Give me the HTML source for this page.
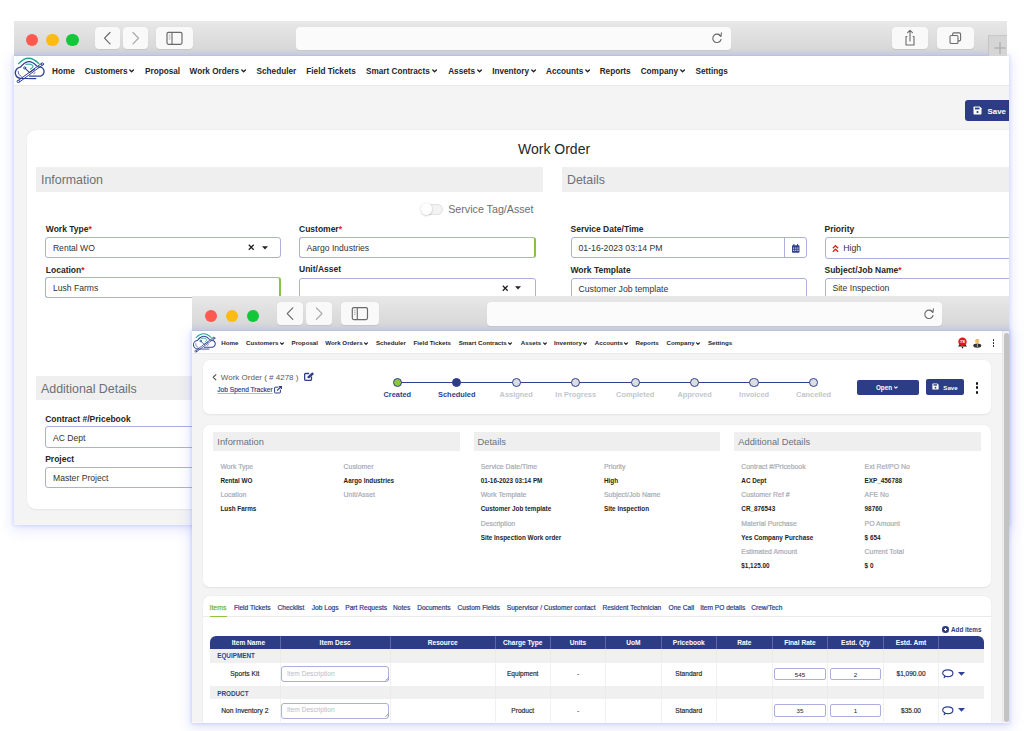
<!DOCTYPE html><html><head><meta charset="utf-8"><style>
html,body{margin:0;padding:0;}
body{width:1024px;height:731px;position:relative;overflow:hidden;background:#fff;font-family:"Liberation Sans",sans-serif;}
.r{position:absolute;box-sizing:border-box;}
.t{position:absolute;white-space:nowrap;line-height:normal;}
svg.r{overflow:visible}
</style></head><body>
<div class="r" style="left:14.00px;top:56.00px;width:995.00px;height:469.00px;box-shadow:0 0 3px 1px rgba(120,130,255,0.22),0 3px 12px 2px rgba(120,130,255,0.20)"></div>
<div style="position:absolute;left:0;top:0;width:1024px;height:731px;clip-path:inset(21px 15px 206px 13.6px)">
<div class="r" style="left:13.60px;top:21.00px;width:993.90px;height:35.00px;background:linear-gradient(#e8e8e8,#d8d8d8 80%,#c3c7e0);"></div>
<div class="r" style="left:13.60px;top:55.00px;width:993.90px;height:1.20px;background:#bcc1df"></div>
<div class="r" style="left:26.00px;top:34.00px;width:12.40px;height:12.40px;border-radius:50%;background:#fd5a4f"></div>
<div class="r" style="left:46.20px;top:34.00px;width:12.40px;height:12.40px;border-radius:50%;background:#fdbb13"></div>
<div class="r" style="left:66.40px;top:34.00px;width:12.40px;height:12.40px;border-radius:50%;background:#12c73a"></div>
<div class="r" style="left:95.00px;top:27.00px;width:25.30px;height:22.40px;background:#f9f9f9;border-radius:4px;box-shadow:0 0.5px 1px rgba(0,0,0,0.08)"></div>
<div class="r" style="left:123.00px;top:27.00px;width:25.00px;height:22.40px;background:#f9f9f9;border-radius:4px;box-shadow:0 0.5px 1px rgba(0,0,0,0.08)"></div>
<div class="r" style="left:156.30px;top:27.00px;width:37.00px;height:22.40px;background:#f9f9f9;border-radius:4px;box-shadow:0 0.5px 1px rgba(0,0,0,0.08)"></div>
<svg class="r" style="left:95px;top:27px" width="25.3" height="22.4" viewBox="0 0 25.3 22.4"><path d="M15 5.5 L9.5 11.2 L15 16.9" fill="none" stroke="#6a6a6a" stroke-width="1.2" stroke-linecap="round" stroke-linejoin="round"/></svg>
<svg class="r" style="left:123px;top:27px" width="25" height="22.4" viewBox="0 0 25 22.4"><path d="M10 5.5 L15.5 11.2 L10 16.9" fill="none" stroke="#a5a5a5" stroke-width="1.2" stroke-linecap="round" stroke-linejoin="round"/></svg>
<svg class="r" style="left:156.3px;top:27px" width="37" height="22.4" viewBox="0 0 37 22.4"><rect x="11" y="5.3" width="15" height="12" rx="1.5" fill="none" stroke="#6a6a6a" stroke-width="1.2"/><line x1="16" y1="5.3" x2="16" y2="17.3" stroke="#6a6a6a" stroke-width="1.1"/><line x1="12.8" y1="8" x2="14.4" y2="8" stroke="#8a8a8a" stroke-width="0.7"/><line x1="12.8" y1="10" x2="14.4" y2="10" stroke="#8a8a8a" stroke-width="0.7"/><line x1="12.8" y1="12" x2="14.4" y2="12" stroke="#8a8a8a" stroke-width="0.7"/></svg>
<div class="r" style="left:295.50px;top:27.40px;width:435.50px;height:22.50px;background:#fbfbfb;border-radius:4px;box-shadow:0 0.5px 1px rgba(0,0,0,0.06)"></div>
<svg class="r" style="left:710px;top:31px" width="14" height="14" viewBox="0 0 14 14"><path d="M10.6 5.2 A4.2 4.2 0 1 0 11 8.5" fill="none" stroke="#6a6a6a" stroke-width="1.1" stroke-linecap="round"/><path d="M8.2 3.2 L11 5.2 L11.4 1.9" fill="none" stroke="#6a6a6a" stroke-width="1.1" stroke-linecap="round" stroke-linejoin="round"/></svg>
<div class="r" style="left:891.80px;top:27.00px;width:36.20px;height:22.40px;background:#f9f9f9;border-radius:4px;box-shadow:0 0.5px 1px rgba(0,0,0,0.08)"></div>
<div class="r" style="left:937.00px;top:27.00px;width:37.00px;height:22.40px;background:#f9f9f9;border-radius:4px;box-shadow:0 0.5px 1px rgba(0,0,0,0.08)"></div>
<svg class="r" style="left:891.8px;top:27px" width="36" height="22.4" viewBox="0 0 36 22.4"><path d="M15.3 9.5 H14 V18 H22 V9.5 H20.7" fill="none" stroke="#6a6a6a" stroke-width="1.1" stroke-linejoin="round"/><path d="M18 14 V3.5 M15.6 5.7 L18 3.3 L20.4 5.7" fill="none" stroke="#6a6a6a" stroke-width="1.1" stroke-linecap="round" stroke-linejoin="round"/></svg>
<svg class="r" style="left:937px;top:27px" width="37" height="22.4" viewBox="0 0 37 22.4"><rect x="13" y="8.5" width="8" height="8" rx="1.3" fill="none" stroke="#6a6a6a" stroke-width="1.1"/><path d="M15.6 8.5 V7.2 Q15.6 5.9 16.9 5.9 H22.3 Q23.6 5.9 23.6 7.2 V12.6 Q23.6 13.9 22.3 13.9 H21" fill="none" stroke="#6a6a6a" stroke-width="1.1"/></svg>
<div class="r" style="left:987.80px;top:35.20px;width:19.70px;height:20.80px;background:#d5d5d5;border-left:1px solid #c4c4c4;border-top:1px solid #c8c8c8"></div>
<svg class="r" style="left:990px;top:38px" width="20" height="18" viewBox="0 0 20 18"><path d="M10 4 V16 M4 10 H16" stroke="#a8a8a8" stroke-width="1.1"/></svg>
<div class="r" style="left:14.00px;top:56.00px;width:995.00px;height:30.00px;background:#fff;border-bottom:1px solid #e8e8e8"></div>
<svg class="r" style="left:12.00px;top:56.00px" width="40.00" height="30.00" viewBox="0 0 40 30">
<g fill="none" stroke-linecap="round" stroke-linejoin="round">
<path d="M6.6 7.6 Q16.4 -3.1 26.8 7.6" stroke="#21a593" stroke-width="1.35"/>
<path d="M14 8.4 C19.5 7.6 24 9.6 18.5 13.1" stroke="#3cb2a0" stroke-width="1.15"/>
<path d="M9.4 22.4 A5.6 5.6 0 0 1 8.4 11.2 Q16.4 0.6 24.6 9.9" stroke="#2f4190" stroke-width="1.35"/>
<path d="M26.2 11 A4.7 4.7 0 1 1 28.6 20.1 L17.6 20.1" stroke="#2f4190" stroke-width="1.35"/>
<path d="M9.4 22.5 L23.8 22.6" stroke="#2f4190" stroke-width="1.2"/>
<path d="M6.1 15.4 Q5.2 18.6 9.3 20.5" stroke="#2f4190" stroke-width="0.8"/>
<path d="M6.7 24.2 L29.2 7.6 M7.6 25.9 L30.4 9.1" stroke="#2f4190" stroke-width="1.0"/>
<path d="M13.4 12.6 L17.6 16.6 L22.6 13" stroke="#2f4190" stroke-width="1.1"/>
<path d="M21.7 17.7 L23 16.8" stroke="#2f4190" stroke-width="0.8"/>
<circle cx="12.7" cy="11.9" r="1.05" stroke="#2f4190" stroke-width="1"/>
<circle cx="30.3" cy="8.1" r="1.25" stroke="#2f4190" stroke-width="1"/>
<circle cx="6.3" cy="25.4" r="1.25" stroke="#2f4190" stroke-width="1"/>
</g></svg>
<div class="t" style="left:52.00px;top:66.98px;font-size:8.2px;font-weight:700;color:#262626;">Home</div>
<div class="t" style="left:84.80px;top:66.98px;font-size:8.2px;font-weight:700;color:#262626;">Customers</div>
<svg class="r" style="left:129.43px;top:68.70px" width="5.2" height="4.12" viewBox="0 0 10 7"><path d="M1.5 1.5 L5 5 L8.5 1.5" fill="none" stroke="#262626" stroke-width="2.69" stroke-linecap="round" stroke-linejoin="round"/></svg>
<div class="t" style="left:145.00px;top:66.98px;font-size:8.2px;font-weight:700;color:#262626;">Proposal</div>
<div class="t" style="left:189.60px;top:66.98px;font-size:8.2px;font-weight:700;color:#262626;">Work Orders</div>
<svg class="r" style="left:240.92px;top:68.70px" width="5.2" height="4.12" viewBox="0 0 10 7"><path d="M1.5 1.5 L5 5 L8.5 1.5" fill="none" stroke="#262626" stroke-width="2.69" stroke-linecap="round" stroke-linejoin="round"/></svg>
<div class="t" style="left:256.60px;top:66.98px;font-size:8.2px;font-weight:700;color:#262626;">Scheduler</div>
<div class="t" style="left:306.30px;top:66.98px;font-size:8.2px;font-weight:700;color:#262626;">Field Tickets</div>
<div class="t" style="left:366.00px;top:66.98px;font-size:8.2px;font-weight:700;color:#262626;">Smart Contracts</div>
<svg class="r" style="left:431.59px;top:68.70px" width="5.2" height="4.12" viewBox="0 0 10 7"><path d="M1.5 1.5 L5 5 L8.5 1.5" fill="none" stroke="#262626" stroke-width="2.69" stroke-linecap="round" stroke-linejoin="round"/></svg>
<div class="t" style="left:448.20px;top:66.98px;font-size:8.2px;font-weight:700;color:#262626;">Assets</div>
<svg class="r" style="left:476.89px;top:68.70px" width="5.2" height="4.12" viewBox="0 0 10 7"><path d="M1.5 1.5 L5 5 L8.5 1.5" fill="none" stroke="#262626" stroke-width="2.69" stroke-linecap="round" stroke-linejoin="round"/></svg>
<div class="t" style="left:492.20px;top:66.98px;font-size:8.2px;font-weight:700;color:#262626;">Inventory</div>
<svg class="r" style="left:530.91px;top:68.70px" width="5.2" height="4.12" viewBox="0 0 10 7"><path d="M1.5 1.5 L5 5 L8.5 1.5" fill="none" stroke="#262626" stroke-width="2.69" stroke-linecap="round" stroke-linejoin="round"/></svg>
<div class="t" style="left:546.00px;top:66.98px;font-size:8.2px;font-weight:700;color:#262626;">Accounts</div>
<svg class="r" style="left:585.16px;top:68.70px" width="5.2" height="4.12" viewBox="0 0 10 7"><path d="M1.5 1.5 L5 5 L8.5 1.5" fill="none" stroke="#262626" stroke-width="2.69" stroke-linecap="round" stroke-linejoin="round"/></svg>
<div class="t" style="left:599.70px;top:66.98px;font-size:8.2px;font-weight:700;color:#262626;">Reports</div>
<div class="t" style="left:640.70px;top:66.98px;font-size:8.2px;font-weight:700;color:#262626;">Company</div>
<svg class="r" style="left:679.86px;top:68.70px" width="5.2" height="4.12" viewBox="0 0 10 7"><path d="M1.5 1.5 L5 5 L8.5 1.5" fill="none" stroke="#262626" stroke-width="2.69" stroke-linecap="round" stroke-linejoin="round"/></svg>
<div class="t" style="left:695.50px;top:66.98px;font-size:8.2px;font-weight:700;color:#262626;">Settings</div>
<div class="r" style="left:14.00px;top:86.00px;width:995.00px;height:439.00px;background:#f4f4f4"></div>
<div class="r" style="left:965.00px;top:99.50px;width:47.00px;height:21.00px;background:#2c3d85;border-radius:3px"></div>
<svg class="r" style="left:973px;top:105.5px" width="9" height="9" viewBox="0 0 9 9"><path d="M0.5 1.2 Q0.5 0.5 1.2 0.5 H6.8 L8.5 2.2 V7.8 Q8.5 8.5 7.8 8.5 H1.2 Q0.5 8.5 0.5 7.8 Z" fill="#fff"/><rect x="2" y="1.6" width="4.5" height="1.8" fill="#2c3d85"/><circle cx="4.5" cy="6" r="1.1" fill="#2c3d85"/></svg>
<div class="t" style="left:987.50px;top:106.65px;font-size:7.9px;font-weight:700;color:#fff;">Save</div>
<div class="r" style="left:27.00px;top:130.00px;width:1033.00px;height:379.00px;background:#fff;border-radius:9px;box-shadow:0 0.5px 2px rgba(0,0,0,0.07)"></div>
<div class="t" style="left:518.00px;top:141.13px;font-size:14.0px;font-weight:400;color:#262626;">Work Order</div>
<div class="r" style="left:36.10px;top:167.00px;width:507.40px;height:25.00px;background:#efefef"></div>
<div class="t" style="left:41.00px;top:173.38px;font-size:12.4px;font-weight:400;color:#6c7079;">Information</div>
<div class="r" style="left:561.50px;top:167.00px;width:498.50px;height:25.00px;background:#efefef"></div>
<div class="t" style="left:567.00px;top:172.68px;font-size:12.4px;font-weight:400;color:#6c7079;">Details</div>
<div class="r" style="left:421.00px;top:203.60px;width:22.00px;height:11.20px;background:#f3f3f3;border:1px solid #e0e0e0;border-radius:6px"></div>
<div class="r" style="left:420.60px;top:203.00px;width:11.80px;height:11.80px;background:#fff;border-radius:50%;box-shadow:0 0.6px 2px rgba(0,0,0,0.28)"></div>
<div class="t" style="left:448.20px;top:203.22px;font-size:10.7px;font-weight:400;color:#6e6e6e;">Service Tag/Asset</div>
<div class="t" style="left:45.80px;top:223.81px;font-size:8.5px;font-weight:700;color:#262626;">Work Type<span style="color:#e02020">*</span></div>
<div class="r" style="left:45.20px;top:236.60px;width:235.70px;height:21.60px;background:#fff;border:1px solid #a9b0dc;border-radius:3px;"></div>
<div class="t" style="left:52.90px;top:243.02px;font-size:8.6px;font-weight:400;color:#333;">Rental WO</div>
<svg class="r" style="left:248.30px;top:244.40px" width="6.5" height="6.5" viewBox="0 0 6.5 6.5"><path d="M0.8 0.8 L5.7 5.7 M5.7 0.8 L0.8 5.7" stroke="#222" stroke-width="1.3"/></svg>
<svg class="r" style="left:261.50px;top:245.80px" width="6" height="4" viewBox="0 0 6 4"><path d="M0 0.3 H6 L3 3.5 Z" fill="#222"/></svg>
<div class="t" style="left:299.00px;top:224.01px;font-size:8.5px;font-weight:700;color:#262626;">Customer<span style="color:#e02020">*</span></div>
<div class="r" style="left:298.70px;top:236.70px;width:237.00px;height:21.30px;background:#fff;border:1px solid #a9b0dc;border-radius:3px;border-right:2px solid #86c440;"></div>
<div class="t" style="left:306.60px;top:242.82px;font-size:8.6px;font-weight:400;color:#333;">Aargo Industries</div>
<div class="t" style="left:570.50px;top:224.01px;font-size:8.5px;font-weight:700;color:#262626;">Service Date/Time</div>
<div class="r" style="left:570.50px;top:237.40px;width:236.00px;height:21.10px;background:#fff;border:1px solid #a9b0dc;border-radius:3px;"></div>
<div class="r" style="left:784.00px;top:237.40px;width:1.00px;height:21.10px;background:#a9b0dc"></div>
<svg class="r" style="left:792px;top:244px" width="7.5" height="8.7" viewBox="0 0 7.5 8.7"><rect x="0" y="1.3" width="7.5" height="7.4" rx="0.8" fill="#2f4190"/><rect x="1.4" y="0" width="1" height="2" fill="#2f4190"/><rect x="5.1" y="0" width="1" height="2" fill="#2f4190"/><g fill="#fff"><rect x="1" y="3.6" width="1.2" height="1"/><rect x="3.15" y="3.6" width="1.2" height="1"/><rect x="5.3" y="3.6" width="1.2" height="1"/><rect x="1" y="5.8" width="1.2" height="1"/><rect x="3.15" y="5.8" width="1.2" height="1"/><rect x="5.3" y="5.8" width="1.2" height="1"/></g></svg>
<div class="t" style="left:578.50px;top:243.43px;font-size:8.7px;font-weight:400;color:#333;">01-16-2023 03:14 PM</div>
<div class="t" style="left:824.50px;top:224.01px;font-size:8.5px;font-weight:700;color:#262626;">Priority</div>
<div class="r" style="left:824.50px;top:237.30px;width:235.50px;height:21.50px;background:#fff;border:1px solid #a9b0dc;border-radius:3px;"></div>
<svg class="r" style="left:831.7px;top:245px" width="7" height="7.5" viewBox="0 0 7 7.5"><path d="M0.8 3.3 L3.5 0.8 L6.2 3.3 M0.8 6.7 L3.5 4.2 L6.2 6.7" fill="none" stroke="#e8201a" stroke-width="1.4"/></svg>
<div class="t" style="left:843.30px;top:243.43px;font-size:8.7px;font-weight:400;color:#333;">High</div>
<div class="t" style="left:45.80px;top:264.51px;font-size:8.5px;font-weight:700;color:#262626;">Location<span style="color:#e02020">*</span></div>
<div class="r" style="left:45.20px;top:277.20px;width:235.70px;height:21.30px;background:#fff;border:1px solid #a9b0dc;border-radius:3px;border-right:2px solid #86c440;"></div>
<div class="t" style="left:52.90px;top:283.22px;font-size:8.6px;font-weight:400;color:#333;">Lush Farms</div>
<div class="t" style="left:299.00px;top:264.31px;font-size:8.5px;font-weight:700;color:#262626;">Unit/Asset</div>
<div class="r" style="left:298.70px;top:277.50px;width:237.00px;height:21.50px;background:#fff;border:1px solid #a9b0dc;border-radius:3px;"></div>
<svg class="r" style="left:502.10px;top:285.00px" width="6.5" height="6.5" viewBox="0 0 6.5 6.5"><path d="M0.8 0.8 L5.7 5.7 M5.7 0.8 L0.8 5.7" stroke="#222" stroke-width="1.3"/></svg>
<svg class="r" style="left:515.30px;top:286.40px" width="6" height="4" viewBox="0 0 6 4"><path d="M0 0.3 H6 L3 3.5 Z" fill="#222"/></svg>
<div class="t" style="left:570.50px;top:264.61px;font-size:8.5px;font-weight:700;color:#262626;">Work Template</div>
<div class="r" style="left:570.50px;top:277.50px;width:236.00px;height:21.50px;background:#fff;border:1px solid #a9b0dc;border-radius:3px;"></div>
<div class="t" style="left:578.50px;top:283.73px;font-size:8.7px;font-weight:400;color:#333;">Customer Job template</div>
<div class="t" style="left:824.50px;top:264.61px;font-size:8.5px;font-weight:700;color:#262626;">Subject/Job Name<span style="color:#e02020">*</span></div>
<div class="r" style="left:824.50px;top:277.50px;width:235.50px;height:21.50px;background:#fff;border:1px solid #a9b0dc;border-radius:3px;"></div>
<div class="t" style="left:832.40px;top:283.03px;font-size:8.7px;font-weight:400;color:#333;">Site Inspection</div>
<div class="r" style="left:35.90px;top:375.50px;width:507.60px;height:24.70px;background:#efefef"></div>
<div class="t" style="left:41.00px;top:381.58px;font-size:12.4px;font-weight:400;color:#6c7079;">Additional Details</div>
<div class="t" style="left:45.20px;top:414.01px;font-size:8.5px;font-weight:700;color:#262626;">Contract #/Pricebook</div>
<div class="r" style="left:45.20px;top:426.20px;width:235.70px;height:22.20px;background:#fff;border:1px solid #a9b0dc;border-radius:3px;"></div>
<div class="t" style="left:53.00px;top:432.82px;font-size:8.6px;font-weight:400;color:#333;">AC Dept</div>
<div class="t" style="left:45.20px;top:454.01px;font-size:8.5px;font-weight:700;color:#262626;">Project</div>
<div class="r" style="left:45.20px;top:467.30px;width:235.70px;height:21.10px;background:#fff;border:1px solid #a9b0dc;border-radius:3px;"></div>
<div class="t" style="left:53.00px;top:473.22px;font-size:8.6px;font-weight:400;color:#333;">Master Project</div>
</div>
<div class="r" style="left:192.00px;top:331.00px;width:817.00px;height:391.50px;box-shadow:0 0 3px 1px rgba(120,130,255,0.25),0 3px 12px 2px rgba(120,130,255,0.22)"></div>
<div style="position:absolute;left:0;top:0;width:1024px;height:731px;clip-path:inset(296px 15px 8.5px 192px)">
<div class="r" style="left:192.00px;top:296.00px;width:817.00px;height:35.00px;background:linear-gradient(#e8e8e8,#d8d8d8 80%,#c3c7e0);"></div>
<div class="r" style="left:192.00px;top:330.00px;width:817.00px;height:1.20px;background:#bcc1df"></div>
<div class="r" style="left:204.80px;top:309.50px;width:12.60px;height:12.60px;border-radius:50%;background:#fd5a4f"></div>
<div class="r" style="left:225.75px;top:309.50px;width:12.60px;height:12.60px;border-radius:50%;background:#fdbb13"></div>
<div class="r" style="left:246.70px;top:309.50px;width:12.60px;height:12.60px;border-radius:50%;background:#12c73a"></div>
<div class="r" style="left:276.70px;top:302.20px;width:26.20px;height:23.20px;background:#f9f9f9;border-radius:4px;box-shadow:0 0.5px 1px rgba(0,0,0,0.08)"></div>
<div class="r" style="left:305.70px;top:302.20px;width:26.20px;height:23.20px;background:#f9f9f9;border-radius:4px;box-shadow:0 0.5px 1px rgba(0,0,0,0.08)"></div>
<div class="r" style="left:341.00px;top:302.20px;width:37.70px;height:23.20px;background:#f9f9f9;border-radius:4px;box-shadow:0 0.5px 1px rgba(0,0,0,0.08)"></div>
<svg class="r" style="left:276.7px;top:302.2px" width="26.2" height="23.2" viewBox="0 0 26.2 23.2"><path d="M15.8 5.8 L10.2 11.6 L15.8 17.4" fill="none" stroke="#6a6a6a" stroke-width="1.2" stroke-linecap="round" stroke-linejoin="round"/></svg>
<svg class="r" style="left:305.7px;top:302.2px" width="26.2" height="23.2" viewBox="0 0 26.2 23.2"><path d="M10.4 5.8 L16 11.6 L10.4 17.4" fill="none" stroke="#a5a5a5" stroke-width="1.2" stroke-linecap="round" stroke-linejoin="round"/></svg>
<svg class="r" style="left:341px;top:302.2px" width="37.7" height="23.2" viewBox="0 0 37.7 23.2"><rect x="11.3" y="5.6" width="15.2" height="12" rx="1.5" fill="none" stroke="#6a6a6a" stroke-width="1.2"/><line x1="16.3" y1="5.6" x2="16.3" y2="17.6" stroke="#6a6a6a" stroke-width="1.1"/><line x1="13.1" y1="8.3" x2="14.6" y2="8.3" stroke="#8a8a8a" stroke-width="0.7"/><line x1="13.1" y1="10.3" x2="14.6" y2="10.3" stroke="#8a8a8a" stroke-width="0.7"/><line x1="13.1" y1="12.3" x2="14.6" y2="12.3" stroke="#8a8a8a" stroke-width="0.7"/></svg>
<div class="r" style="left:486.80px;top:302.10px;width:455.20px;height:23.50px;background:#fbfbfb;border-radius:4px;box-shadow:0 0.5px 1px rgba(0,0,0,0.06)"></div>
<svg class="r" style="left:922px;top:306.5px" width="14" height="14" viewBox="0 0 14 14"><path d="M10.6 5.2 A4.2 4.2 0 1 0 11 8.5" fill="none" stroke="#6a6a6a" stroke-width="1.1" stroke-linecap="round"/><path d="M8.2 3.2 L11 5.2 L11.4 1.9" fill="none" stroke="#6a6a6a" stroke-width="1.1" stroke-linecap="round" stroke-linejoin="round"/></svg>
<div class="r" style="left:192.00px;top:331.00px;width:810.00px;height:23.00px;background:#fff;border-bottom:1px solid #ebebeb"></div>
<svg class="r" style="left:191.20px;top:331.50px" width="30.25" height="22.69" viewBox="0 0 40 30">
<g fill="none" stroke-linecap="round" stroke-linejoin="round">
<path d="M6.6 7.6 Q16.4 -3.1 26.8 7.6" stroke="#21a593" stroke-width="1.35"/>
<path d="M14 8.4 C19.5 7.6 24 9.6 18.5 13.1" stroke="#3cb2a0" stroke-width="1.15"/>
<path d="M9.4 22.4 A5.6 5.6 0 0 1 8.4 11.2 Q16.4 0.6 24.6 9.9" stroke="#2f4190" stroke-width="1.35"/>
<path d="M26.2 11 A4.7 4.7 0 1 1 28.6 20.1 L17.6 20.1" stroke="#2f4190" stroke-width="1.35"/>
<path d="M9.4 22.5 L23.8 22.6" stroke="#2f4190" stroke-width="1.2"/>
<path d="M6.1 15.4 Q5.2 18.6 9.3 20.5" stroke="#2f4190" stroke-width="0.8"/>
<path d="M6.7 24.2 L29.2 7.6 M7.6 25.9 L30.4 9.1" stroke="#2f4190" stroke-width="1.0"/>
<path d="M13.4 12.6 L17.6 16.6 L22.6 13" stroke="#2f4190" stroke-width="1.1"/>
<path d="M21.7 17.7 L23 16.8" stroke="#2f4190" stroke-width="0.8"/>
<circle cx="12.7" cy="11.9" r="1.05" stroke="#2f4190" stroke-width="1"/>
<circle cx="30.3" cy="8.1" r="1.25" stroke="#2f4190" stroke-width="1"/>
<circle cx="6.3" cy="25.4" r="1.25" stroke="#2f4190" stroke-width="1"/>
</g></svg>
<div class="t" style="left:221.20px;top:339.39px;font-size:6.2px;font-weight:700;color:#262626;">Home</div>
<div class="t" style="left:246.01px;top:339.39px;font-size:6.2px;font-weight:700;color:#262626;">Customers</div>
<svg class="r" style="left:279.79px;top:341.70px" width="4.0" height="3.4" viewBox="0 0 10 7"><path d="M1.5 1.5 L5 5 L8.5 1.5" fill="none" stroke="#262626" stroke-width="3.25" stroke-linecap="round" stroke-linejoin="round"/></svg>
<div class="t" style="left:291.54px;top:339.39px;font-size:6.2px;font-weight:700;color:#262626;">Proposal</div>
<div class="t" style="left:325.27px;top:339.39px;font-size:6.2px;font-weight:700;color:#262626;">Work Orders</div>
<svg class="r" style="left:364.11px;top:341.70px" width="4.0" height="3.4" viewBox="0 0 10 7"><path d="M1.5 1.5 L5 5 L8.5 1.5" fill="none" stroke="#262626" stroke-width="3.25" stroke-linecap="round" stroke-linejoin="round"/></svg>
<div class="t" style="left:375.94px;top:339.39px;font-size:6.2px;font-weight:700;color:#262626;">Scheduler</div>
<div class="t" style="left:413.53px;top:339.39px;font-size:6.2px;font-weight:700;color:#262626;">Field Tickets</div>
<div class="t" style="left:458.68px;top:339.39px;font-size:6.2px;font-weight:700;color:#262626;">Smart Contracts</div>
<svg class="r" style="left:508.31px;top:341.70px" width="4.0" height="3.4" viewBox="0 0 10 7"><path d="M1.5 1.5 L5 5 L8.5 1.5" fill="none" stroke="#262626" stroke-width="3.25" stroke-linecap="round" stroke-linejoin="round"/></svg>
<div class="t" style="left:520.85px;top:339.39px;font-size:6.2px;font-weight:700;color:#262626;">Assets</div>
<svg class="r" style="left:542.58px;top:341.70px" width="4.0" height="3.4" viewBox="0 0 10 7"><path d="M1.5 1.5 L5 5 L8.5 1.5" fill="none" stroke="#262626" stroke-width="3.25" stroke-linecap="round" stroke-linejoin="round"/></svg>
<div class="t" style="left:554.12px;top:339.39px;font-size:6.2px;font-weight:700;color:#262626;">Inventory</div>
<svg class="r" style="left:583.43px;top:341.70px" width="4.0" height="3.4" viewBox="0 0 10 7"><path d="M1.5 1.5 L5 5 L8.5 1.5" fill="none" stroke="#262626" stroke-width="3.25" stroke-linecap="round" stroke-linejoin="round"/></svg>
<div class="t" style="left:594.81px;top:339.39px;font-size:6.2px;font-weight:700;color:#262626;">Accounts</div>
<svg class="r" style="left:624.46px;top:341.70px" width="4.0" height="3.4" viewBox="0 0 10 7"><path d="M1.5 1.5 L5 5 L8.5 1.5" fill="none" stroke="#262626" stroke-width="3.25" stroke-linecap="round" stroke-linejoin="round"/></svg>
<div class="t" style="left:635.43px;top:339.39px;font-size:6.2px;font-weight:700;color:#262626;">Reports</div>
<div class="t" style="left:666.43px;top:339.39px;font-size:6.2px;font-weight:700;color:#262626;">Company</div>
<svg class="r" style="left:696.08px;top:341.70px" width="4.0" height="3.4" viewBox="0 0 10 7"><path d="M1.5 1.5 L5 5 L8.5 1.5" fill="none" stroke="#262626" stroke-width="3.25" stroke-linecap="round" stroke-linejoin="round"/></svg>
<div class="t" style="left:707.88px;top:339.39px;font-size:6.2px;font-weight:700;color:#262626;">Settings</div>
<svg class="r" style="left:956.5px;top:336.5px" width="11" height="12" viewBox="0 0 11 12"><path d="M1 9.5 Q2.6 8.6 2.8 6 Q3 2.6 5.5 2.4 Q8 2.6 8.2 6 Q8.4 8.6 10 9.5 Z" fill="#1a1a1a"/><circle cx="5.5" cy="10.6" r="0.8" fill="#1a1a1a"/><circle cx="5.5" cy="4.7" r="4.2" fill="#e8141b"/><text x="5.5" y="6.3" font-size="4.4" font-weight="700" fill="#fff" text-anchor="middle" font-family="Liberation Sans">78</text></svg>
<svg class="r" style="left:972.5px;top:336.8px" width="8.5" height="11" viewBox="0 0 8.5 11"><ellipse cx="4.25" cy="8.6" rx="4" ry="2.2" fill="#333"/><circle cx="4.25" cy="4.2" r="2.1" fill="#f1c27d"/><path d="M2.2 3.6 Q4.25 0.2 6.3 3.6 Z" fill="#e6b54a"/><rect x="3.9" y="7" width="0.7" height="3" fill="#ddd"/></svg>
<div class="r" style="left:992.60px;top:339.25px;width:1.90px;height:1.90px;background:#1a1a1a;border-radius:50%"></div>
<div class="r" style="left:992.60px;top:342.05px;width:1.90px;height:1.90px;background:#1a1a1a;border-radius:50%"></div>
<div class="r" style="left:992.60px;top:344.85px;width:1.90px;height:1.90px;background:#1a1a1a;border-radius:50%"></div>
<div class="r" style="left:192.00px;top:354.00px;width:810.00px;height:368.50px;background:#f4f4f4"></div>
<div class="r" style="left:1002.00px;top:331.00px;width:7.00px;height:391.50px;background:#f1f1f1;border-left:1px solid #e6e6e6"></div>
<div class="r" style="left:1004.40px;top:333.20px;width:4.20px;height:389.30px;background:#c2c2c2;border-radius:2.5px"></div>
<div class="r" style="left:203.00px;top:360.00px;width:788.00px;height:54.00px;background:#fff;border-radius:7px;box-shadow:0 0.5px 2px rgba(0,0,0,0.07)"></div>
<svg class="r" style="left:212.4px;top:374.4px" width="5" height="6.5" viewBox="0 0 5 6.5"><path d="M3.9 0.7 L1.2 3.25 L3.9 5.8" fill="none" stroke="#555" stroke-width="1.1" stroke-linecap="round" stroke-linejoin="round"/></svg>
<div class="t" style="left:220.80px;top:373.16px;font-size:8.0px;font-weight:400;color:#5a5a5a;">Work Order ( # 4278 )</div>
<svg class="r" style="left:304px;top:372.4px" width="10.4" height="9" viewBox="0 0 10.4 9"><path d="M5.2 1.5 H1.5 Q0.65 1.5 0.65 2.35 V7.6 Q0.65 8.4 1.5 8.4 H6.7 Q7.5 8.4 7.5 7.6 V4.6" fill="none" stroke="#2c3d85" stroke-width="1.3"/><path d="M3.4 6.1 L3.7 4.4 L8.3 0.3 L10 2 L5.3 6.2 Z" fill="#2c3d85"/></svg>
<div class="t" style="left:217.30px;top:386.13px;font-size:6.6px;font-weight:400;color:#2c3d85;-webkit-text-stroke:0.15px #2c3d85;text-decoration:underline;text-decoration-color:#b4bbdc;text-underline-offset:1.2px">Job Spend Tracker</div>
<svg class="r" style="left:273.9px;top:386.2px" width="8" height="7.6" viewBox="0 0 8 7.6"><path d="M4.2 1.2 H1.2 Q0.6 1.2 0.6 1.8 V6.4 Q0.6 7 1.2 7 H5.8 Q6.4 7 6.4 6.4 V3.6" fill="none" stroke="#2c3d85" stroke-width="1"/><path d="M3 4.6 L7.2 0.5 M4.8 0.5 H7.4 V3.1" fill="none" stroke="#2c3d85" stroke-width="1.1"/></svg>
<div class="r" style="left:397.30px;top:381.80px;width:416.30px;height:1.50px;background:#2f4190"></div>
<div class="r" style="left:392.65px;top:377.95px;width:9.30px;height:9.30px;background:#8cc63f;border:1.3px solid #2f4190;border-radius:50%"></div>
<div class="t" style="left:197.30px;width:400px;text-align:center;top:389.60px;font-size:7.4px;font-weight:700;color:#2f4190;">Created</div>
<div class="r" style="left:452.12px;top:377.95px;width:9.30px;height:9.30px;background:#2c3d85;border:1.3px solid #2f4190;border-radius:50%"></div>
<div class="t" style="left:256.77px;width:400px;text-align:center;top:389.60px;font-size:7.4px;font-weight:700;color:#2f4190;">Scheduled</div>
<div class="r" style="left:511.59px;top:377.95px;width:9.30px;height:9.30px;background:#dcdde2;border:1.3px solid #2f4190;border-radius:50%"></div>
<div class="t" style="left:316.24px;width:400px;text-align:center;top:389.60px;font-size:7.4px;font-weight:700;color:#c3c6cf;">Assigned</div>
<div class="r" style="left:571.06px;top:377.95px;width:9.30px;height:9.30px;background:#dcdde2;border:1.3px solid #2f4190;border-radius:50%"></div>
<div class="t" style="left:375.71px;width:400px;text-align:center;top:389.60px;font-size:7.4px;font-weight:700;color:#c3c6cf;">In Progress</div>
<div class="r" style="left:630.53px;top:377.95px;width:9.30px;height:9.30px;background:#dcdde2;border:1.3px solid #2f4190;border-radius:50%"></div>
<div class="t" style="left:435.18px;width:400px;text-align:center;top:389.60px;font-size:7.4px;font-weight:700;color:#c3c6cf;">Completed</div>
<div class="r" style="left:690.00px;top:377.95px;width:9.30px;height:9.30px;background:#dcdde2;border:1.3px solid #2f4190;border-radius:50%"></div>
<div class="t" style="left:494.65px;width:400px;text-align:center;top:389.60px;font-size:7.4px;font-weight:700;color:#c3c6cf;">Approved</div>
<div class="r" style="left:749.47px;top:377.95px;width:9.30px;height:9.30px;background:#dcdde2;border:1.3px solid #2f4190;border-radius:50%"></div>
<div class="t" style="left:554.12px;width:400px;text-align:center;top:389.60px;font-size:7.4px;font-weight:700;color:#c3c6cf;">Invoiced</div>
<div class="r" style="left:808.94px;top:377.95px;width:9.30px;height:9.30px;background:#dcdde2;border:1.3px solid #2f4190;border-radius:50%"></div>
<div class="t" style="left:613.59px;width:400px;text-align:center;top:389.60px;font-size:7.4px;font-weight:700;color:#c3c6cf;">Cancelled</div>
<div class="r" style="left:857.00px;top:379.80px;width:62.00px;height:15.10px;background:#2c3d85;border-radius:2px"></div>
<div class="t" style="left:875.90px;top:384.20px;font-size:6.3px;font-weight:700;color:#fff;">Open</div>
<svg class="r" style="left:894.20px;top:385.60px" width="3.8" height="3.28" viewBox="0 0 10 7"><path d="M1.5 1.5 L5 5 L8.5 1.5" fill="none" stroke="#fff" stroke-width="2.89" stroke-linecap="round" stroke-linejoin="round"/></svg>
<div class="r" style="left:926.30px;top:378.90px;width:37.30px;height:16.00px;background:#2c3d85;border-radius:2px"></div>
<svg class="r" style="left:931.8px;top:383.2px" width="7" height="7" viewBox="0 0 9 9"><path d="M0.5 1.2 Q0.5 0.5 1.2 0.5 H6.8 L8.5 2.2 V7.8 Q8.5 8.5 7.8 8.5 H1.2 Q0.5 8.5 0.5 7.8 Z" fill="#fff"/><rect x="2" y="1.6" width="4.5" height="1.8" fill="#2c3d85"/><circle cx="4.5" cy="6" r="1.1" fill="#2c3d85"/></svg>
<div class="t" style="left:943.30px;top:384.23px;font-size:6.15px;font-weight:700;color:#fff;">Save</div>
<div class="r" style="left:975.60px;top:382.05px;width:2.90px;height:2.90px;background:#111;border-radius:50%"></div>
<div class="r" style="left:975.60px;top:386.35px;width:2.90px;height:2.90px;background:#111;border-radius:50%"></div>
<div class="r" style="left:975.60px;top:390.65px;width:2.90px;height:2.90px;background:#111;border-radius:50%"></div>
<div class="r" style="left:203.00px;top:425.20px;width:788.00px;height:162.20px;background:#fff;border-radius:7px;box-shadow:0 0.5px 2px rgba(0,0,0,0.07)"></div>
<div class="r" style="left:213.30px;top:432.30px;width:247.00px;height:18.70px;background:#efefef"></div>
<div class="t" style="left:217.30px;top:436.58px;font-size:9.3px;font-weight:400;color:#6c7079;">Information</div>
<div class="r" style="left:474.30px;top:432.30px;width:246.20px;height:18.70px;background:#efefef"></div>
<div class="t" style="left:477.50px;top:436.58px;font-size:9.3px;font-weight:400;color:#6c7079;">Details</div>
<div class="r" style="left:734.10px;top:432.30px;width:246.70px;height:18.70px;background:#efefef"></div>
<div class="t" style="left:738.30px;top:436.58px;font-size:9.3px;font-weight:400;color:#6c7079;">Additional Details</div>
<div class="t" style="left:220.40px;top:462.56px;font-size:6.9px;font-weight:400;color:#a7acb7;-webkit-text-stroke:0.2px #a7acb7">Work Type</div>
<div class="t" style="left:220.40px;top:477.05px;font-size:6.35px;font-weight:700;color:#1e1e1e;">Rental WO</div>
<div class="t" style="left:220.40px;top:491.36px;font-size:6.9px;font-weight:400;color:#a7acb7;-webkit-text-stroke:0.2px #a7acb7">Location</div>
<div class="t" style="left:220.40px;top:505.45px;font-size:6.35px;font-weight:700;color:#1e1e1e;">Lush Farms</div>
<div class="t" style="left:343.60px;top:462.56px;font-size:6.9px;font-weight:400;color:#a7acb7;-webkit-text-stroke:0.2px #a7acb7">Customer</div>
<div class="t" style="left:343.60px;top:477.05px;font-size:6.35px;font-weight:700;color:#1e1e1e;">Aargo Industries</div>
<div class="t" style="left:343.60px;top:491.36px;font-size:6.9px;font-weight:400;color:#a7acb7;-webkit-text-stroke:0.2px #a7acb7">Unit/Asset</div>
<div class="t" style="left:480.70px;top:462.56px;font-size:6.9px;font-weight:400;color:#a7acb7;-webkit-text-stroke:0.2px #a7acb7">Service Date/Time</div>
<div class="t" style="left:480.70px;top:477.05px;font-size:6.35px;font-weight:700;color:#1e1e1e;">01-16-2023 03:14 PM</div>
<div class="t" style="left:480.70px;top:491.36px;font-size:6.9px;font-weight:400;color:#a7acb7;-webkit-text-stroke:0.2px #a7acb7">Work Template</div>
<div class="t" style="left:480.70px;top:505.45px;font-size:6.35px;font-weight:700;color:#1e1e1e;">Customer Job template</div>
<div class="t" style="left:480.70px;top:519.76px;font-size:6.9px;font-weight:400;color:#a7acb7;-webkit-text-stroke:0.2px #a7acb7">Description</div>
<div class="t" style="left:480.70px;top:533.85px;font-size:6.35px;font-weight:700;color:#1e1e1e;">Site Inspection Work order</div>
<div class="t" style="left:604.00px;top:462.56px;font-size:6.9px;font-weight:400;color:#a7acb7;-webkit-text-stroke:0.2px #a7acb7">Priority</div>
<div class="t" style="left:604.00px;top:477.05px;font-size:6.35px;font-weight:700;color:#1e1e1e;">High</div>
<div class="t" style="left:604.00px;top:491.36px;font-size:6.9px;font-weight:400;color:#a7acb7;-webkit-text-stroke:0.2px #a7acb7">Subject/Job Name</div>
<div class="t" style="left:604.00px;top:505.45px;font-size:6.35px;font-weight:700;color:#1e1e1e;">Site Inspection</div>
<div class="t" style="left:741.30px;top:462.56px;font-size:6.9px;font-weight:400;color:#a7acb7;-webkit-text-stroke:0.2px #a7acb7">Contract #/Pricebook</div>
<div class="t" style="left:741.30px;top:477.05px;font-size:6.35px;font-weight:700;color:#1e1e1e;">AC Dept</div>
<div class="t" style="left:741.30px;top:491.36px;font-size:6.9px;font-weight:400;color:#a7acb7;-webkit-text-stroke:0.2px #a7acb7">Customer Ref #</div>
<div class="t" style="left:741.30px;top:505.45px;font-size:6.35px;font-weight:700;color:#1e1e1e;">CR_876543</div>
<div class="t" style="left:741.30px;top:519.76px;font-size:6.9px;font-weight:400;color:#a7acb7;-webkit-text-stroke:0.2px #a7acb7">Material Purchase</div>
<div class="t" style="left:741.30px;top:533.85px;font-size:6.35px;font-weight:700;color:#1e1e1e;">Yes Company Purchase</div>
<div class="t" style="left:741.30px;top:548.16px;font-size:6.9px;font-weight:400;color:#a7acb7;-webkit-text-stroke:0.2px #a7acb7">Estimated Amount</div>
<div class="t" style="left:741.30px;top:562.25px;font-size:6.35px;font-weight:700;color:#1e1e1e;">$1,125.00</div>
<div class="t" style="left:864.60px;top:462.56px;font-size:6.9px;font-weight:400;color:#a7acb7;-webkit-text-stroke:0.2px #a7acb7">Ext Ref/PO No</div>
<div class="t" style="left:864.60px;top:477.05px;font-size:6.35px;font-weight:700;color:#1e1e1e;">EXP_456788</div>
<div class="t" style="left:864.60px;top:491.36px;font-size:6.9px;font-weight:400;color:#a7acb7;-webkit-text-stroke:0.2px #a7acb7">AFE No</div>
<div class="t" style="left:864.60px;top:505.45px;font-size:6.35px;font-weight:700;color:#1e1e1e;">98760</div>
<div class="t" style="left:864.60px;top:519.76px;font-size:6.9px;font-weight:400;color:#a7acb7;-webkit-text-stroke:0.2px #a7acb7">PO Amount</div>
<div class="t" style="left:864.60px;top:533.85px;font-size:6.35px;font-weight:700;color:#1e1e1e;">$ 654</div>
<div class="t" style="left:864.60px;top:548.16px;font-size:6.9px;font-weight:400;color:#a7acb7;-webkit-text-stroke:0.2px #a7acb7">Current Total</div>
<div class="t" style="left:864.60px;top:562.25px;font-size:6.35px;font-weight:700;color:#1e1e1e;">$ 0</div>
<div class="r" style="left:203.00px;top:595.70px;width:788.00px;height:164.30px;background:#fff;border-radius:7px;box-shadow:0 0.5px 2px rgba(0,0,0,0.07)"></div>
<div class="r" style="left:203.00px;top:616.30px;width:788.00px;height:1.00px;background:#ebebeb"></div>
<div class="t" style="left:209.50px;top:603.56px;font-size:6.9px;font-weight:400;color:#7fb83a;-webkit-text-stroke:0.25px #7fb83a">Items</div>
<div class="t" style="left:233.90px;top:603.83px;font-size:6.6px;font-weight:400;color:#2c3d85;-webkit-text-stroke:0.2px #2c3d85">Field Tickets</div>
<div class="t" style="left:277.50px;top:603.83px;font-size:6.6px;font-weight:400;color:#2c3d85;-webkit-text-stroke:0.2px #2c3d85">Checklist</div>
<div class="t" style="left:311.80px;top:603.83px;font-size:6.6px;font-weight:400;color:#2c3d85;-webkit-text-stroke:0.2px #2c3d85">Job Logs</div>
<div class="t" style="left:345.30px;top:603.83px;font-size:6.6px;font-weight:400;color:#2c3d85;-webkit-text-stroke:0.2px #2c3d85">Part Requests</div>
<div class="t" style="left:393.00px;top:603.83px;font-size:6.6px;font-weight:400;color:#2c3d85;-webkit-text-stroke:0.2px #2c3d85">Notes</div>
<div class="t" style="left:417.20px;top:603.83px;font-size:6.6px;font-weight:400;color:#2c3d85;-webkit-text-stroke:0.2px #2c3d85">Documents</div>
<div class="t" style="left:457.60px;top:603.83px;font-size:6.6px;font-weight:400;color:#2c3d85;-webkit-text-stroke:0.2px #2c3d85">Custom Fields</div>
<div class="t" style="left:506.80px;top:603.83px;font-size:6.6px;font-weight:400;color:#2c3d85;-webkit-text-stroke:0.2px #2c3d85">Supervisor / Customer contact</div>
<div class="t" style="left:602.40px;top:603.83px;font-size:6.6px;font-weight:400;color:#2c3d85;-webkit-text-stroke:0.2px #2c3d85">Resident Technician</div>
<div class="t" style="left:668.50px;top:603.83px;font-size:6.6px;font-weight:400;color:#2c3d85;-webkit-text-stroke:0.2px #2c3d85">One Call</div>
<div class="t" style="left:700.20px;top:603.83px;font-size:6.6px;font-weight:400;color:#2c3d85;-webkit-text-stroke:0.2px #2c3d85">Item PO details</div>
<div class="t" style="left:751.20px;top:603.83px;font-size:6.6px;font-weight:400;color:#2c3d85;-webkit-text-stroke:0.2px #2c3d85">Crew/Tech</div>
<div class="r" style="left:209.50px;top:615.60px;width:17.70px;height:1.80px;background:#8cc63f"></div>
<div class="r" style="left:942.30px;top:626.20px;width:6.40px;height:6.40px;background:#2c3d85;border-radius:50%"></div>
<div class="r" style="left:943.80px;top:628.95px;width:3.40px;height:0.90px;background:#fff"></div>
<div class="r" style="left:945.05px;top:627.70px;width:0.90px;height:3.40px;background:#fff"></div>
<div class="t" style="left:951.00px;top:626.00px;font-size:6.3px;font-weight:700;color:#2c3d85;">Add items</div>
<div class="r" style="left:209.70px;top:636.30px;width:774.20px;height:12.40px;background:#2c3d85;border-radius:6px 6px 0 0"></div>
<div class="t" style="left:48.40px;width:400px;text-align:center;top:638.63px;font-size:6.6px;font-weight:700;color:#fff;">Item Name</div>
<div class="t" style="left:135.20px;width:400px;text-align:center;top:638.63px;font-size:6.6px;font-weight:700;color:#fff;">Item Desc</div>
<div class="t" style="left:242.75px;width:400px;text-align:center;top:638.63px;font-size:6.6px;font-weight:700;color:#fff;">Resource</div>
<div class="t" style="left:322.70px;width:400px;text-align:center;top:638.63px;font-size:6.6px;font-weight:700;color:#fff;">Charge Type</div>
<div class="t" style="left:378.00px;width:400px;text-align:center;top:638.63px;font-size:6.6px;font-weight:700;color:#fff;">Units</div>
<div class="t" style="left:433.45px;width:400px;text-align:center;top:638.63px;font-size:6.6px;font-weight:700;color:#fff;">UoM</div>
<div class="t" style="left:488.75px;width:400px;text-align:center;top:638.63px;font-size:6.6px;font-weight:700;color:#fff;">Pricebook</div>
<div class="t" style="left:544.35px;width:400px;text-align:center;top:638.63px;font-size:6.6px;font-weight:700;color:#fff;">Rate</div>
<div class="t" style="left:599.95px;width:400px;text-align:center;top:638.63px;font-size:6.6px;font-weight:700;color:#fff;">Final Rate</div>
<div class="t" style="left:655.50px;width:400px;text-align:center;top:638.63px;font-size:6.6px;font-weight:700;color:#fff;">Estd. Qty</div>
<div class="t" style="left:711.05px;width:400px;text-align:center;top:638.63px;font-size:6.6px;font-weight:700;color:#fff;">Estd. Amt</div>
<div class="r" style="left:279.60px;top:636.30px;width:1.00px;height:12.40px;background:#5a68a3"></div>
<div class="r" style="left:390.00px;top:636.30px;width:1.00px;height:12.40px;background:#5a68a3"></div>
<div class="r" style="left:494.70px;top:636.30px;width:1.00px;height:12.40px;background:#5a68a3"></div>
<div class="r" style="left:549.90px;top:636.30px;width:1.00px;height:12.40px;background:#5a68a3"></div>
<div class="r" style="left:605.30px;top:636.30px;width:1.00px;height:12.40px;background:#5a68a3"></div>
<div class="r" style="left:660.80px;top:636.30px;width:1.00px;height:12.40px;background:#5a68a3"></div>
<div class="r" style="left:715.90px;top:636.30px;width:1.00px;height:12.40px;background:#5a68a3"></div>
<div class="r" style="left:772.00px;top:636.30px;width:1.00px;height:12.40px;background:#5a68a3"></div>
<div class="r" style="left:827.10px;top:636.30px;width:1.00px;height:12.40px;background:#5a68a3"></div>
<div class="r" style="left:883.10px;top:636.30px;width:1.00px;height:12.40px;background:#5a68a3"></div>
<div class="r" style="left:938.20px;top:636.30px;width:1.00px;height:12.40px;background:#5a68a3"></div>
<div class="r" style="left:209.70px;top:648.70px;width:774.20px;height:14.10px;background:#f0f0f0"></div>
<div class="r" style="left:279.60px;top:648.70px;width:1.00px;height:14.10px;background:#ebebeb"></div>
<div class="r" style="left:390.00px;top:648.70px;width:1.00px;height:14.10px;background:#ebebeb"></div>
<div class="r" style="left:494.70px;top:648.70px;width:1.00px;height:14.10px;background:#ebebeb"></div>
<div class="r" style="left:549.90px;top:648.70px;width:1.00px;height:14.10px;background:#ebebeb"></div>
<div class="r" style="left:605.30px;top:648.70px;width:1.00px;height:14.10px;background:#ebebeb"></div>
<div class="r" style="left:660.80px;top:648.70px;width:1.00px;height:14.10px;background:#ebebeb"></div>
<div class="r" style="left:715.90px;top:648.70px;width:1.00px;height:14.10px;background:#ebebeb"></div>
<div class="r" style="left:772.00px;top:648.70px;width:1.00px;height:14.10px;background:#ebebeb"></div>
<div class="r" style="left:827.10px;top:648.70px;width:1.00px;height:14.10px;background:#ebebeb"></div>
<div class="r" style="left:883.10px;top:648.70px;width:1.00px;height:14.10px;background:#ebebeb"></div>
<div class="r" style="left:938.20px;top:648.70px;width:1.00px;height:14.10px;background:#ebebeb"></div>
<div class="t" style="left:217.20px;top:652.35px;font-size:6.35px;font-weight:700;color:#2f4190;">EQUIPMENT</div>
<div class="r" style="left:209.70px;top:662.80px;width:774.20px;height:23.20px;background:#fff"></div>
<div class="r" style="left:279.60px;top:662.80px;width:1.00px;height:23.20px;background:#f1f1f1"></div>
<div class="r" style="left:390.00px;top:662.80px;width:1.00px;height:23.20px;background:#f1f1f1"></div>
<div class="r" style="left:494.70px;top:662.80px;width:1.00px;height:23.20px;background:#f1f1f1"></div>
<div class="r" style="left:549.90px;top:662.80px;width:1.00px;height:23.20px;background:#f1f1f1"></div>
<div class="r" style="left:605.30px;top:662.80px;width:1.00px;height:23.20px;background:#f1f1f1"></div>
<div class="r" style="left:660.80px;top:662.80px;width:1.00px;height:23.20px;background:#f1f1f1"></div>
<div class="r" style="left:715.90px;top:662.80px;width:1.00px;height:23.20px;background:#f1f1f1"></div>
<div class="r" style="left:772.00px;top:662.80px;width:1.00px;height:23.20px;background:#f1f1f1"></div>
<div class="r" style="left:827.10px;top:662.80px;width:1.00px;height:23.20px;background:#f1f1f1"></div>
<div class="r" style="left:883.10px;top:662.80px;width:1.00px;height:23.20px;background:#f1f1f1"></div>
<div class="r" style="left:938.20px;top:662.80px;width:1.00px;height:23.20px;background:#f1f1f1"></div>
<div class="t" style="left:44.85px;width:400px;text-align:center;top:670.24px;font-size:6.7px;font-weight:400;color:#222;-webkit-text-stroke:0.15px #222">Sports Kit</div>
<div class="r" style="left:281.20px;top:666.30px;width:108.20px;height:15.90px;background:#fff;border:1px solid #a9b0dc;border-radius:3px"></div>
<div class="t" style="left:287.00px;top:669.83px;font-size:6.6px;font-weight:400;color:#b9bcc4;">Item Description</div>
<svg class="r" style="left:384.5px;top:677.00px" width="4" height="4" viewBox="0 0 4 4"><path d="M3.6 0.4 L0.4 3.6 M3.6 2 L2 3.6" stroke="#777" stroke-width="0.6"/></svg>
<div class="t" style="left:322.70px;width:400px;text-align:center;top:670.33px;font-size:6.6px;font-weight:400;color:#222;-webkit-text-stroke:0.15px #222">Equipment</div>
<div class="t" style="left:378.00px;width:400px;text-align:center;top:670.33px;font-size:6.6px;font-weight:400;color:#222;">-</div>
<div class="t" style="left:488.75px;width:400px;text-align:center;top:670.33px;font-size:6.6px;font-weight:400;color:#222;-webkit-text-stroke:0.15px #222">Standard</div>
<div class="r" style="left:774.00px;top:667.60px;width:52.10px;height:12.90px;background:#fff;border:1px solid #a9b0dc;border-radius:2px"></div>
<div class="r" style="left:829.60px;top:667.60px;width:51.80px;height:12.90px;background:#fff;border:1px solid #a9b0dc;border-radius:2px"></div>
<div class="t" style="left:600.00px;width:400px;text-align:center;top:670.69px;font-size:6.2px;font-weight:400;color:#222;">545</div>
<div class="t" style="left:655.50px;width:400px;text-align:center;top:670.69px;font-size:6.2px;font-weight:400;color:#222;">2</div>
<div class="t" style="left:711.05px;width:400px;text-align:center;top:670.42px;font-size:6.5px;font-weight:400;color:#222;-webkit-text-stroke:0.15px #222">$1,090.00</div>
<svg class="r" style="left:942.3px;top:669.20px" width="12" height="10" viewBox="0 0 12 10"><path d="M2.2 8.6 L3 6.9 Q0.7 5.8 0.7 4.2 Q0.7 0.8 5.8 0.8 Q10.9 0.8 10.9 4.2 Q10.9 7.6 5.8 7.6 Q4.3 7.6 3.3 7.2 Z" fill="none" stroke="#2f4190" stroke-width="1.2" stroke-linejoin="round"/></svg>
<svg class="r" style="left:957.6px;top:672.00px" width="7" height="4" viewBox="0 0 7 4"><path d="M0 0 H7 L3.5 3.8 Z" fill="#2f4190"/></svg>
<div class="r" style="left:209.70px;top:686.00px;width:774.20px;height:13.20px;background:#f0f0f0"></div>
<div class="r" style="left:279.60px;top:686.00px;width:1.00px;height:13.20px;background:#ebebeb"></div>
<div class="r" style="left:390.00px;top:686.00px;width:1.00px;height:13.20px;background:#ebebeb"></div>
<div class="r" style="left:494.70px;top:686.00px;width:1.00px;height:13.20px;background:#ebebeb"></div>
<div class="r" style="left:549.90px;top:686.00px;width:1.00px;height:13.20px;background:#ebebeb"></div>
<div class="r" style="left:605.30px;top:686.00px;width:1.00px;height:13.20px;background:#ebebeb"></div>
<div class="r" style="left:660.80px;top:686.00px;width:1.00px;height:13.20px;background:#ebebeb"></div>
<div class="r" style="left:715.90px;top:686.00px;width:1.00px;height:13.20px;background:#ebebeb"></div>
<div class="r" style="left:772.00px;top:686.00px;width:1.00px;height:13.20px;background:#ebebeb"></div>
<div class="r" style="left:827.10px;top:686.00px;width:1.00px;height:13.20px;background:#ebebeb"></div>
<div class="r" style="left:883.10px;top:686.00px;width:1.00px;height:13.20px;background:#ebebeb"></div>
<div class="r" style="left:938.20px;top:686.00px;width:1.00px;height:13.20px;background:#ebebeb"></div>
<div class="t" style="left:217.20px;top:689.65px;font-size:6.35px;font-weight:700;color:#2f4190;">PRODUCT</div>
<div class="r" style="left:209.70px;top:699.20px;width:774.20px;height:30.80px;background:#fff"></div>
<div class="r" style="left:279.60px;top:699.20px;width:1.00px;height:30.80px;background:#f1f1f1"></div>
<div class="r" style="left:390.00px;top:699.20px;width:1.00px;height:30.80px;background:#f1f1f1"></div>
<div class="r" style="left:494.70px;top:699.20px;width:1.00px;height:30.80px;background:#f1f1f1"></div>
<div class="r" style="left:549.90px;top:699.20px;width:1.00px;height:30.80px;background:#f1f1f1"></div>
<div class="r" style="left:605.30px;top:699.20px;width:1.00px;height:30.80px;background:#f1f1f1"></div>
<div class="r" style="left:660.80px;top:699.20px;width:1.00px;height:30.80px;background:#f1f1f1"></div>
<div class="r" style="left:715.90px;top:699.20px;width:1.00px;height:30.80px;background:#f1f1f1"></div>
<div class="r" style="left:772.00px;top:699.20px;width:1.00px;height:30.80px;background:#f1f1f1"></div>
<div class="r" style="left:827.10px;top:699.20px;width:1.00px;height:30.80px;background:#f1f1f1"></div>
<div class="r" style="left:883.10px;top:699.20px;width:1.00px;height:30.80px;background:#f1f1f1"></div>
<div class="r" style="left:938.20px;top:699.20px;width:1.00px;height:30.80px;background:#f1f1f1"></div>
<div class="t" style="left:44.85px;width:400px;text-align:center;top:706.64px;font-size:6.7px;font-weight:400;color:#222;-webkit-text-stroke:0.15px #222">Non Inventory 2</div>
<div class="r" style="left:281.20px;top:702.70px;width:108.20px;height:15.90px;background:#fff;border:1px solid #a9b0dc;border-radius:3px"></div>
<div class="t" style="left:287.00px;top:706.23px;font-size:6.6px;font-weight:400;color:#b9bcc4;">Item Description</div>
<svg class="r" style="left:384.5px;top:713.40px" width="4" height="4" viewBox="0 0 4 4"><path d="M3.6 0.4 L0.4 3.6 M3.6 2 L2 3.6" stroke="#777" stroke-width="0.6"/></svg>
<div class="t" style="left:322.70px;width:400px;text-align:center;top:706.73px;font-size:6.6px;font-weight:400;color:#222;-webkit-text-stroke:0.15px #222">Product</div>
<div class="t" style="left:378.00px;width:400px;text-align:center;top:706.73px;font-size:6.6px;font-weight:400;color:#222;">-</div>
<div class="t" style="left:488.75px;width:400px;text-align:center;top:706.73px;font-size:6.6px;font-weight:400;color:#222;-webkit-text-stroke:0.15px #222">Standard</div>
<div class="r" style="left:774.00px;top:704.00px;width:52.10px;height:12.90px;background:#fff;border:1px solid #a9b0dc;border-radius:2px"></div>
<div class="r" style="left:829.60px;top:704.00px;width:51.80px;height:12.90px;background:#fff;border:1px solid #a9b0dc;border-radius:2px"></div>
<div class="t" style="left:600.00px;width:400px;text-align:center;top:707.09px;font-size:6.2px;font-weight:400;color:#222;">35</div>
<div class="t" style="left:655.50px;width:400px;text-align:center;top:707.09px;font-size:6.2px;font-weight:400;color:#222;">1</div>
<div class="t" style="left:711.05px;width:400px;text-align:center;top:706.82px;font-size:6.5px;font-weight:400;color:#222;-webkit-text-stroke:0.15px #222">$35.00</div>
<svg class="r" style="left:942.3px;top:705.60px" width="12" height="10" viewBox="0 0 12 10"><path d="M2.2 8.6 L3 6.9 Q0.7 5.8 0.7 4.2 Q0.7 0.8 5.8 0.8 Q10.9 0.8 10.9 4.2 Q10.9 7.6 5.8 7.6 Q4.3 7.6 3.3 7.2 Z" fill="none" stroke="#2f4190" stroke-width="1.2" stroke-linejoin="round"/></svg>
<svg class="r" style="left:957.6px;top:708.40px" width="7" height="4" viewBox="0 0 7 4"><path d="M0 0 H7 L3.5 3.8 Z" fill="#2f4190"/></svg>
</div>
</body></html>
